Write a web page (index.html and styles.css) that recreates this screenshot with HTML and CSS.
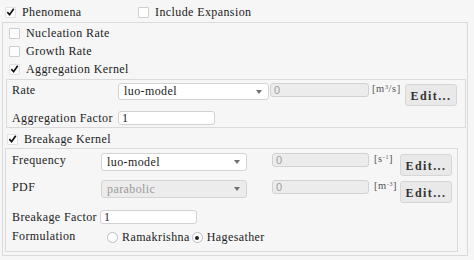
FILE: index.html
```html
<!DOCTYPE html>
<html lang="en">
<head>
    <meta charset="UTF-8">
    <link rel="stylesheet" href="styles.css">
</head>
<body>
<div class="panel">
    <div class="top">
        <label class="check phen"><span class="box on"><svg viewBox="0 0 10 10"><path d="M1.5 5.2 L4 8 L8.6 1.4"/></svg></span>Phenomena</label>
        <label class="check"><span class="box"></span>Include Expansion</label>
    </div>

    <div class="group outer">
        <label class="check row"><span class="box"></span>Nucleation Rate</label>
        <label class="check row"><span class="box"></span>Growth Rate</label>
        <label class="check row"><span class="box on"><svg viewBox="0 0 10 10"><path d="M1.5 5.2 L4 8 L8.6 1.4"/></svg></span>Aggregation Kernel</label>

        <!-- aggregation -->
        <div class="group agg">
            <div class="line">
                <div class="lbl">Rate</div>
                <div class="select"><span>luo-model</span><i class="arrow"></i></div>
                <div class="field dis">0</div>
                <div class="unit">[m<sup>3</sup>/s]</div>
                <button class="edit">Edit...</button>
            </div>
            <div class="line fac">
                <div class="lbl">Aggregation Factor</div>
                <div class="field">1</div>
            </div>
        </div>

        <label class="check row brk"><span class="box on"><svg viewBox="0 0 10 10"><path d="M1.5 5.2 L4 8 L8.6 1.4"/></svg></span>Breakage Kernel</label>

        <!-- breakage -->
        <div class="group brkbox">
            <div class="line">
                <div class="lbl">Frequency</div>
                <div class="select"><span>luo-model</span><i class="arrow"></i></div>
                <div class="field dis">0</div>
                <div class="unit">[s<sup>-1</sup>]</div>
                <button class="edit">Edit...</button>
            </div>
            <div class="line pdf">
                <div class="lbl">PDF</div>
                <div class="select off"><span>parabolic</span><i class="arrow"></i></div>
                <div class="field dis">0</div>
                <div class="unit">[m<sup>-3</sup>]</div>
                <button class="edit">Edit...</button>
            </div>
            <div class="line fac">
                <div class="lbl">Breakage Factor</div>
                <div class="field">1</div>
            </div>
            <div class="line form">
                <div class="lbl">Formulation</div>
                <label class="radio"><span class="dot"></span>Ramakrishna</label>
                <label class="radio"><span class="dot sel"></span>Hagesather</label>
            </div>
        </div>
    </div>
</div>
</body>
</html>
```

FILE: styles.css
```css
body {
    margin: 0;
    background-color: #f6f6f6;
    font-family: "Liberation Serif", "Times New Roman", serif;
    font-size: 12px;
    letter-spacing: 0.4px;
    color: #222;
}

.panel {
    width: 474px;
    height: 260px;
    overflow: hidden;
}

.top {
    display: flex;
    align-items: center;
    height: 22px;
    padding-left: 5px;
    box-sizing: border-box;
    padding-top: 2px;
}

.check {
    display: flex;
    align-items: center;
    gap: 6px;
    white-space: nowrap;
}

.phen {
    width: 133px;
}

.box {
    width: 9px;
    height: 9px;
    border: 1px solid #cfcfcf;
    background-color: #fdfdfd;
    border-radius: 1px;
    display: flex;
}

.box.on {
    border-color: #e2e2e2;
}

.box svg {
    width: 10px;
    height: 10px;
    margin: -1px 0 0 0;
}

.box svg path {
    fill: none;
    stroke: #111;
    stroke-width: 1.9;
}

.group {
    border: 1px solid #dadada;
    box-sizing: border-box;
}

.outer {
    margin-left: 2px;
    width: 466px;
    height: 234px;
    padding-top: 1px;
}

.row {
    height: 18px;
    padding-left: 6px;
}

.agg {
    margin: 1px 0 0 3px;
    width: 460px;
    height: 49px;
    padding: 3px 0 0 5px;
}

.brk {
    margin-top: 2px;
    padding-left: 4px;
}

.brkbox {
    margin-left: 2px;
    width: 453px;
    height: 104px;
    padding: 4px 0 0 6px;
}

.line {
    display: flex;
    align-items: flex-start;
}

.lbl {
    line-height: 14px;
    white-space: nowrap;
    flex: none;
}

.agg .lbl {
    width: 106px;
}

.brkbox .lbl {
    width: 89px;
}

.select {
    flex: none;
    height: 17px;
    box-sizing: border-box;
    border: 1px solid #d4d4d4;
    border-radius: 3px;
    background-color: #fff;
    display: flex;
    align-items: center;
    justify-content: space-between;
    padding: 0 6px 0 5px;
}

.agg .select {
    width: 151px;
}

.brkbox .select {
    width: 146px;
    height: 18px;
}

.select.off {
    background-color: #ececec;
    color: #9a9a9a;
}

.arrow {
    width: 0;
    height: 0;
    border-left: 3.5px solid transparent;
    border-right: 3.5px solid transparent;
    border-top: 4px solid #707070;
}

.field {
    flex: none;
    height: 14px;
    box-sizing: border-box;
    border: 1px solid #d2d2d2;
    border-radius: 3px;
    background-color: #fff;
    line-height: 12px;
    padding-left: 3px;
    width: 97px;
}

.field.dis {
    background-color: #ececec;
    color: #a0a0a0;
    font-family: "Liberation Sans", Arial, sans-serif;
    font-size: 11px;
    letter-spacing: 0;
}

.agg .field.dis {
    margin-left: 1px;
    width: 99px;
}

.brkbox .field.dis {
    margin-left: 25px;
}

.unit {
    flex: none;
    font-size: 10.5px;
    letter-spacing: 0.6px;
    color: #555;
    line-height: 12px;
}

.unit sup {
    font-size: 6px;
    vertical-align: 3px;
    line-height: 0;
}

.agg .unit {
    margin-left: 3px;
    width: 33px;
}

.brkbox .unit {
    margin-left: 5px;
    width: 26px;
}

.edit {
    flex: none;
    width: 52px;
    height: 22px;
    margin-top: 1px;
    padding: 0;
    border: 1px solid #d6d6d6;
    border-radius: 3px;
    background-color: #e9e9e9;
    font-family: "Liberation Serif", serif;
    font-size: 12px;
    font-weight: bold;
    letter-spacing: 1.4px;
    color: #333;
    padding-top: 3px;
}

.fac {
    align-items: center;
}

.agg .fac {
    margin-top: 5px;
}

.agg .fac .field {
    width: 97px;
}

.pdf {
    margin-top: 4px;
}

.brkbox .fac {
    margin-top: 7px;
}

.brkbox .fac .field {
    width: 97px;
    margin-left: -1px;
}

.form {
    margin-top: 6px;
    align-items: center;
}

.form .lbl {
    margin-top: -3px;
}

.radio {
    display: flex;
    align-items: center;
    gap: 4px;
    margin-left: 6px;
    margin-right: 1px;
}

.radio + .radio {
    margin-left: 1px;
}

.dot {
    width: 9px;
    height: 9px;
    border: 1px solid #bdbdbd;
    border-radius: 50%;
    background-color: #fff;
    position: relative;
}

.dot.sel::after {
    content: "";
    position: absolute;
    left: 2.5px;
    top: 2.5px;
    width: 4px;
    height: 4px;
    border-radius: 50%;
    background-color: #222;
}
```
